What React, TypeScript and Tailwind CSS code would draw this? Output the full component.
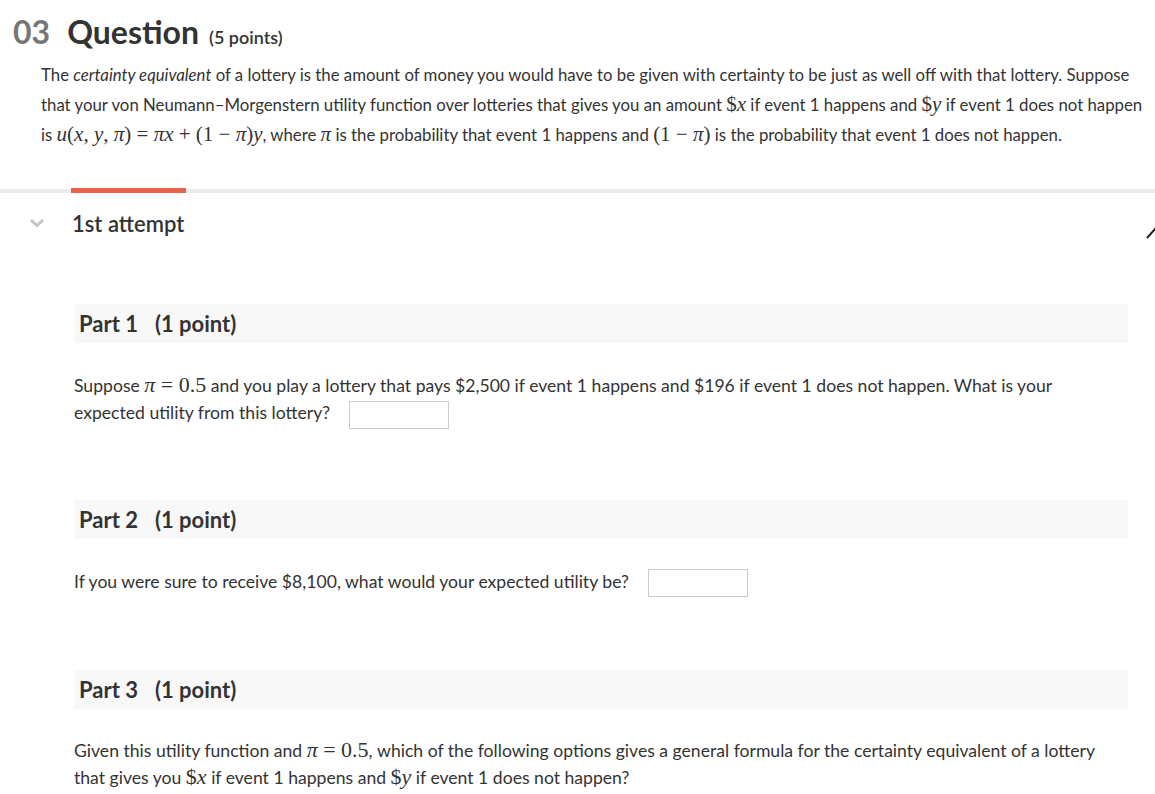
import React from "react";

const M = ({ children }: { children: React.ReactNode }) => (
  <span className="text-[1.25em] leading-none" style={{ fontFamily: '"Liberation Serif", "DejaVu Serif", serif' }}>
    {children}
  </span>
);
const V = ({ children }: { children: React.ReactNode }) => <i>{children}</i>;

function PartHeader({ n }: { n: number }) {
  return (
    <div className="bg-[#f8f8f8] h-[39px] flex items-center pl-[5px] text-[22px] font-bold text-[#333]">
      <span>Part {n}</span>
      <span className="ml-[17px]">(1 point)</span>
    </div>
  );
}

function Blank() {
  return <span className="inline-block align-middle w-[100px] h-[28px] border border-[#ccc] bg-white ml-[19px]" />;
}

export default function App() {
  return (
    <div
      className="relative w-[1155px] h-[794px] overflow-hidden bg-white text-[#333]"
      style={{ fontFamily: 'Lato, "Open Sans", sans-serif' }}
    >
      <div className="pl-[13px] pt-[8px] flex items-baseline">
        <span className="text-[32px] font-bold text-[#767676]">03</span>
        <span className="text-[32px] font-bold text-[#333] ml-[17px]">Question</span>
        <span className="text-[18px] font-semibold ml-[10px]">(5 points)</span>
      </div>

      <p className="pl-[41px] pr-[4px] mt-[4px] text-[16.8px] leading-[30px]">
        The <i>certainty equivalent</i> of a lottery is the amount of money you would have to be given with certainty to be just as well off with that lottery. Suppose that your von Neumann–Morgenstern utility function over lotteries that gives you an amount{" "}
        <M>$<V>x</V></M> if event 1 happens and <M>$<V>y</V></M> if event 1 does not happen is{" "}
        <M>
          <V>u</V>(<V>x</V>, <V>y</V>, <V>π</V>) = <V>πx</V> + (1 − <V>π</V>)<V>y</V>
        </M>
        , where <M><V>π</V></M> is the probability that event 1 happens and <M>(1 − <V>π</V>)</M> is the probability that event 1 does not happen.
      </p>

      <div className="relative mt-[39px] h-[4px] bg-[#ececec]">
        <div className="absolute left-[71px] top-[-1px] w-[115px] h-[5px] bg-[#e8644a]" />
      </div>

      <div className="flex items-center mt-[16px] h-[28px]">
        <svg className="ml-[29px]" width="16" height="10" viewBox="0 0 16 10">
          <path d="M2 2 L8 7.5 L14 2" fill="none" stroke="#c4c4c4" strokeWidth="3" />
        </svg>
        <span className="ml-[27px] text-[22px] font-semibold">1st attempt</span>
      </div>
      <svg className="absolute left-[1146px] top-[226px]" width="10" height="14" viewBox="0 0 10 14">
        <path d="M1 12 L10 2" stroke="#222" strokeWidth="2" />
      </svg>

      <div className="ml-[74px] w-[1054px]">
        <div className="mt-[67px]">
          <PartHeader n={1} />
        </div>
        <p className="mt-[29px] text-[17.6px] leading-[27px] pr-[50px]">
          Suppose <M><V>π</V> = 0.5</M> and you play a lottery that pays $2,500 if event 1 happens and $196 if event 1 does not happen. What is your expected utility from this lottery?
          <Blank />
        </p>

        <div className="mt-[71px]">
          <PartHeader n={2} />
        </div>
        <p className="mt-[29px] text-[17.6px] leading-[27px]">
          If you were sure to receive $8,100, what would your expected utility be?
          <Blank />
        </p>

        <div className="mt-[73px]">
          <PartHeader n={3} />
        </div>
        <p className="mt-[28px] text-[17.6px] leading-[27px] pr-[10px]">
          Given this utility function and <M><V>π</V> = 0.5</M>, which of the following options gives a general formula for the certainty equivalent of a lottery that gives you <M>$<V>x</V></M> if event 1 happens and <M>$<V>y</V></M> if event 1 does not happen?
        </p>
      </div>
    </div>
  );
}
